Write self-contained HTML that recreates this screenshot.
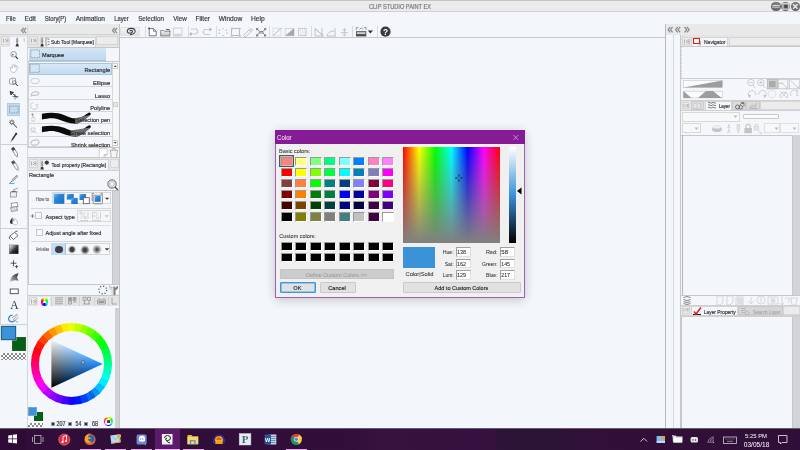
<!DOCTYPE html>
<html><head><meta charset="utf-8">
<style>
*{box-sizing:border-box;margin:0;padding:0}
html,body{width:800px;height:450px;overflow:hidden;background:#f3f6fa;font-family:"Liberation Sans",sans-serif;color:#333}
.a{position:absolute}
.t{position:absolute;white-space:nowrap;font-size:6.5px;line-height:8px}
svg{position:absolute;overflow:visible}
</style></head><body>

<div class="a" style="left:0px;top:0px;width:800px;height:12px;background:#ebebeb;border-top:1px solid #c4c4c4;border-bottom:1px solid #d0d0d0"></div>
<div class="a" style="left:771.4px;top:1.9px;width:9.2px;height:9.2px;border-radius:50%;background:radial-gradient(circle at 50% 35%,#8c8c8c,#5c5c5c 80%)"></div>
<div class="a" style="left:781.1999999999999px;top:1.9px;width:9.2px;height:9.2px;border-radius:50%;background:radial-gradient(circle at 50% 35%,#8c8c8c,#5c5c5c 80%)"></div>
<div class="a" style="left:790.6999999999999px;top:1.9px;width:9.2px;height:9.2px;border-radius:50%;background:radial-gradient(circle at 50% 35%,#8c8c8c,#5c5c5c 80%)"></div>
<svg style="left:0px;top:0px" width="800" height="12" viewBox="0 0 800 12"><rect x="772.3" y="5" width="7.4" height="2.6" fill="#d8d8d8"/><rect x="772.3" y="6" width="7.4" height="0.6" fill="#666"/><rect x="782.9" y="3.6" width="5.8" height="5.6" fill="none" stroke="#d0d0d0" stroke-width="1.2"/><rect x="784.3" y="5" width="3" height="2.8" fill="#444"/><path d="M793 4.2 L797.6 8.8 M797.6 4.2 L793 8.8" stroke="#eee" stroke-width="1.3"/></svg>
<div class="a" style="left:0px;top:12px;width:800px;height:13px;background:#f3f6fa;border-bottom:1px solid #cdd0d4"></div>
<div class="a" style="left:119px;top:24px;width:546px;height:14px;background:#f3f6fa;border-bottom:1px solid #c6c8cc"></div>
<div class="a" style="left:120.3px;top:26.7px;width:20.2px;height:9.5px;background:linear-gradient(#f4f4f4,#e2e2e2);border:0.5px solid #e0e0e0;border-radius:1px"></div>
<div class="a" style="left:144.5px;top:26px;width:0.8px;height:11px;background:#d8dadd"></div>
<div class="a" style="left:187.8px;top:26px;width:0.8px;height:11px;background:#d8dadd"></div>
<div class="a" style="left:216px;top:26px;width:0.8px;height:11px;background:#d8dadd"></div>
<div class="a" style="left:269.4px;top:26px;width:0.8px;height:11px;background:#d8dadd"></div>
<div class="a" style="left:311.3px;top:26px;width:0.8px;height:11px;background:#d8dadd"></div>
<div class="a" style="left:352.4px;top:26px;width:0.8px;height:11px;background:#d8dadd"></div>
<div class="a" style="left:376.8px;top:26px;width:0.8px;height:11px;background:#d8dadd"></div>
<svg style="left:0px;top:0px" width="400" height="40" viewBox="0 0 400 40"><path d="M131.2 31.3 m-1.3 0 a1.3 1.0 0 1 1 2.6 0 a2.6 1.9 0 1 1 -5.2 0 a3.9 2.9 0 1 1 7.8 0 a5 3.3 0 0 1 -5 3.3" fill="none" stroke="#3d3d3d" stroke-width="1.05"/><path d="M149.2 28.6 h4.3 l2.7 2.7 v4.5 h-7z" fill="#fff" stroke="#444" stroke-width="0.7"/><path d="M153.5 28.6 v2.7 h2.7" fill="none" stroke="#444" stroke-width="0.6"/><circle cx="149" cy="28.3" r="0.9" fill="#333"/><defs><linearGradient id="fo" x1="0" y1="0" x2="0" y2="1"><stop offset="0" stop-color="#f4f4f4"/><stop offset="1" stop-color="#bdbdbd"/></linearGradient></defs><path d="M160.6 30.5 h3 l0.8 0.8 h5.5 v4.7 h-9.3z" fill="url(#fo)" stroke="#555" stroke-width="0.6"/><path d="M166 30 a2.5 2 0 0 1 4 0.5" fill="none" stroke="#333" stroke-width="0.9"/><path d="M170 30.5 l0.5 1 l-1.3 -0.2z" fill="#333"/><rect x="173.3" y="28" width="8.7" height="8" fill="none" stroke="#c8c8c8" stroke-width="0.8"/><rect x="174.5" y="33.8" width="6.3" height="2" fill="#d0d0d0"/><path d="M191 29 h4.3 a2.5 2.5 0 0 1 0 5 h-5" fill="none" stroke="#b8b8b8" stroke-width="1.1" stroke-dasharray="1.2,0.5"/><path d="M189 34 l2.5 -2 v4z" fill="#b0b0b0"/><path d="M210 34.5 h-4.3 a2.5 2.5 0 0 1 0 -5 h5" fill="none" stroke="#b8b8b8" stroke-width="1.1" stroke-dasharray="1.2,0.5"/><path d="M212 29.5 l-2.5 -2 v4z" fill="#b0b0b0"/><g fill="#b0b0b0"><circle cx="223" cy="28.6" r="0.7"/><circle cx="226.3" cy="30.2" r="0.7"/><circle cx="227" cy="33.2" r="0.7"/><circle cx="223" cy="35.6" r="0.7"/><circle cx="219.4" cy="33.2" r="0.7"/><circle cx="219.6" cy="30" r="0.7"/></g><rect x="231.6" y="28.6" width="8" height="7" fill="none" stroke="#aaa" stroke-width="0.8"/><g fill="#c8c8c8"><rect x="230.6" y="27.6" width="2.2" height="2.2"/><rect x="238.5" y="27.6" width="2.2" height="2.2"/><rect x="230.6" y="34.6" width="2.2" height="2.2"/><rect x="238.5" y="34.6" width="2.2" height="2.2"/></g><path d="M243.5 35.5 l5.5 -5.5 l1.8 1.8 l-5.5 5.5z" fill="none" stroke="#b5b5b5" stroke-width="0.8"/><path d="M249 30 l2 -2 l2 2 l-2 2z" fill="#ddd" stroke="#bbb" stroke-width="0.5"/><path d="M257.5 29.5 l2 2 h3.5 l2 -2 M257.5 35 l2 -2 h3.5 l2 2 M259.5 31.5 v1.5 M263 31.5 v1.5" fill="none" stroke="#888" stroke-width="1"/><g fill="#888"><rect x="256" y="28" width="2.2" height="2.2"/><rect x="264" y="28" width="2.2" height="2.2"/><rect x="256" y="34.3" width="2.2" height="2.2"/><rect x="264" y="34.3" width="2.2" height="2.2"/></g><rect x="273" y="28.3" width="8" height="7.5" fill="none" stroke="#c0c0c0" stroke-width="0.7" stroke-dasharray="1,0.6"/><path d="M272.8 36 L281.3 28" stroke="#b0b0b0" stroke-width="0.8"/><rect x="285.2" y="28.3" width="8.8" height="7.5" fill="none" stroke="#c0c0c0" stroke-width="0.6"/><path d="M285.2 35.8 L294 28.3 V35.8z" fill="#a8a8a8"/><rect x="297.8" y="27.8" width="9" height="8.4" fill="#eceef0"/><rect x="298.5" y="28.5" width="7.6" height="7" fill="none" stroke="#9a9a9a" stroke-width="0.8" stroke-dasharray="0.9,0.9"/><path d="M315 28.5 V36 H323.5 z M315 28.5 L323.5 36 M322 28 v8" fill="none" stroke="#b8b8b8" stroke-width="0.8"/><path d="M327 36 h9 M335 28 v8 M327 36 a7 5 0 0 1 7 -5" fill="none" stroke="#bdbdbd" stroke-width="0.9"/><path d="M344.5 27.8 v8.5 M342.5 30 h4 M341 32.5 h7 M342.5 35 h4" fill="none" stroke="#c8c8c8" stroke-width="1.1"/><defs><linearGradient id="sc" x1="0" y1="0" x2="0" y2="1"><stop offset="0" stop-color="#777"/><stop offset="1" stop-color="#444"/></linearGradient></defs><rect x="356" y="31" width="10.3" height="5.4" fill="url(#sc)"/><rect x="357" y="32.3" width="8.3" height="1.6" fill="#ddd"/><path d="M356.3 29.8 v-2.2 h2 M366 29.8 v-2.2 h-2 M359.5 29.3 l1.8 -1.3 l1.8 1.3" fill="none" stroke="#555" stroke-width="0.6"/><path d="M367.8 30.4 h5.2 l-2.6 3z" fill="#333"/><circle cx="385.5" cy="31.7" r="5.1" fill="#3a3a3a"/><text x="385.6" y="34.8" font-size="8.4" font-weight="bold" text-anchor="middle" fill="#fff" font-family="Liberation Sans">?</text></svg>
<div class="a" style="left:120px;top:38px;width:545px;height:390px;background:#f3f6fa"></div>
<div class="a" style="left:0px;top:24px;width:119px;height:11.3px;background:#e9e9e9;border-bottom:0.8px solid #d2d2d2"></div>
<svg style="left:0px;top:0px" width="120" height="40" viewBox="0 0 120 40"><path d="M114.6 28 L112.4 30.6 L114.6 33.2 M117 28 L114.8 30.6 L117 33.2 M23.6 28 L21.4 30.6 L23.6 33.2 M26 28 L23.8 30.6 L26 33.2" fill="none" stroke="#8a8a8a" stroke-width="1.2"/></svg>
<div class="a" style="left:119px;top:24px;width:1px;height:404px;background:#c4c4c4"></div>
<div class="a" style="left:0px;top:35px;width:27px;height:12px;background:#e5e5e5"></div>
<div class="a" style="left:1px;top:36px;width:9px;height:8.5px;background:#ececec;border:1px solid #d6d6d6"></div>
<svg style="left:1px;top:36px" width="9" height="9" viewBox="0 0 9 9"><path d="M2.5 2.5 v4 M4 3 l1.5 1.5 L4 6 M5.5 3h2 M5.5 4.5h2 M5.5 6h2" stroke="#888" stroke-width="0.6" fill="none"/></svg>
<div class="a" style="left:10px;top:36.5px;width:16.5px;height:10.5px;background:#f3f6fa"></div>
<svg style="left:14px;top:37.3px" width="6" height="10" viewBox="0 0 6 10"><path d="M2.9 0.3 L3.5 0.3 L4.3 3 L4.1 6.6 L2.3 6.6 L2.1 3 Z" fill="#a8a8a8"/><path d="M3.2 1 v5" stroke="#666" stroke-width="0.35"/><path d="M1.6 9.6 q0.2 -3 1.6 -3 q1.4 0 1.6 3z" fill="#333"/></svg>
<svg style="left:0px;top:0px" width="30" height="50" viewBox="0 0 30 50"><path d="M23.6 38.8 l0.7 -0.3 v3.5" stroke="#999" stroke-width="0.5" fill="none"/></svg>
<div class="a" style="left:27.2px;top:25px;width:0.8px;height:403px;background:#d6d6d6"></div>
<div class="a" style="left:0px;top:47px;width:27px;height:278px;background:#f3f6fa;border-left:1px solid #d3d3d3;border-bottom:1px solid #d0d0d0"></div>
<div class="a" style="left:0px;top:144px;width:27px;height:1px;background:#cfcfcf"></div>
<div class="a" style="left:0px;top:228px;width:27px;height:1px;background:#cfcfcf"></div>
<div class="a" style="left:7.1px;top:102.9px;width:13px;height:13px;background:#c5dcef;border:1px solid #b0cce4"></div>
<svg style="left:0px;top:0px" width="27" height="330" viewBox="0 0 27 330"><rect x="9.6" y="106" width="8.6" height="7" fill="none" stroke="#555" stroke-width="0.6" stroke-dasharray="0.9,0.8"/><circle cx="13.6" cy="54.3" r="2.8" fill="#fafafa" stroke="#777" stroke-width="0.7"/><circle cx="12.8" cy="54.8" r="0.7" fill="#333"/><path d="M15.6 56.4 l2.2 2.6" stroke="#222" stroke-width="1.1"/><path d="M11 70.5 l-1-2.5 l1-0.8 l1.3 1.3 v-3.3 l1-0.6 l0.9 0.6 v2 l1-2.3 l1 0.5 l-0.5 2.3 l1.3-1.3 l0.9 0.7 l-1.5 3 l-1.3 2.2 h-2.6z" fill="#fff" stroke="#999" stroke-width="0.55"/><path d="M9.5 79.5 l3-1.5 l3 0.5 v5.5 l-3 0.5 l-3-1z" fill="#fff" stroke="#666" stroke-width="0.6"/><path d="M12.5 78 v6.5" stroke="#888" stroke-width="0.5"/><circle cx="14.5" cy="82.3" r="1.7" fill="none" stroke="#555" stroke-width="0.6"/><path d="M15.7 83.5 l2 2.5" stroke="#222" stroke-width="0.9"/><path d="M10 91.5 l3.5 1 l-1 1 l5 4.5 M10 91.5 l1 3.5 l1-1" fill="#222" stroke="#222" stroke-width="0.8"/><path d="M15 94 v5.5 M12.5 96.5 h6" stroke="#333" stroke-width="0.6"/><g stroke="#444" stroke-width="0.7"><path d="M11.8 119.5 v5.6 M9 122.3 h5.6 M9.8 120.3 l4 4 M13.8 120.3 l-4 4"/></g><circle cx="11.8" cy="122.3" r="1.5" fill="#fff" stroke="#333" stroke-width="0.6"/><path d="M13.2 123.8 l3.8 3.8" stroke="#333" stroke-width="1"/><path d="M16 134 l-4 6" stroke="#333" stroke-width="1.4"/><path d="M12 140 l-1 1.8" stroke="#555" stroke-width="0.8"/><circle cx="16.2" cy="133.8" r="1" fill="#222"/><path d="M11.5 148.5 l2-1.3 l4 6.5 l-0.3 3.2 l-2.2-2z" fill="#fff" stroke="#444" stroke-width="0.6"/><path d="M11.3 148.4 l2.4 -1.4 l1.6 2.6 l-2.5 1.5z" fill="#444"/><path d="M11.5 162 l2.5-1.2 l4 6.3 l0.2 3.2 l-2.6 -1.8z" fill="#fff" stroke="#555" stroke-width="0.6"/><path d="M11.3 161.8 l2.6 -1.2 l1.5 2.4 l-2.6 1.4z" fill="#555"/><path d="M17.5 175.5 l-5.5 5.5" stroke="#888" stroke-width="1.8"/><path d="M17.5 175.5 l-5.5 5.5" stroke="#eee" stroke-width="0.6"/><path d="M12 181 l-1.5 1.5 q-0.5 1 -1.2 1" stroke="#555" stroke-width="0.9" fill="none"/><path d="M9.5 183.5 h5" stroke="#5aaee0" stroke-width="1.1"/><rect x="10.5" y="192" width="6" height="5" fill="#eee" stroke="#555" stroke-width="0.5"/><path d="M11 192 q2.5 -2.5 5 0" fill="#666"/><path d="M13 190 l5 -2 M14 191 l4 1" stroke="#555" stroke-width="0.5"/><path d="M11 203.5 l6 -1 l1 4 l-6 1z" fill="#fff" stroke="#555" stroke-width="0.6"/><path d="M10.5 207.5 l6 -1 l1 4 l-6 1z" fill="#ddd" stroke="#666" stroke-width="0.6"/><path d="M12.5 217.5 q-3 3 -2.5 5 q0.8 2 2.6 1.5z" fill="#333"/><path d="M15 218.5 q3 3 2.5 4.8 q-1 2 -3 1.5 q-2 -0.5 -2 -2.5z" fill="#fff" stroke="#888" stroke-width="0.5"/><path d="M12.6 217.5 q1 2 1.5 4" stroke="#666" stroke-width="0.5" fill="none"/><path d="M10 236 l4.5 -3.5 l3.5 3 l-4.5 4z" fill="#fff" stroke="#333" stroke-width="0.7"/><path d="M9.5 236.5 q-0.5 2.5 0.8 3" stroke="#333" stroke-width="0.8" fill="none"/><path d="M15 232 l2.5 -1" stroke="#333" stroke-width="0.8"/><defs><linearGradient id="gr1" x1="0" y1="0" x2="1" y2="1"><stop offset="0" stop-color="#fff"/><stop offset="0.55" stop-color="#333"/><stop offset="1" stop-color="#000"/></linearGradient><linearGradient id="gr2" x1="1" y1="0" x2="0" y2="1"><stop offset="0" stop-color="#222"/><stop offset="1" stop-color="#ccc"/></linearGradient></defs><rect x="9.5" y="245" width="8.7" height="8.8" fill="url(#gr1)" stroke="#333" stroke-width="0.4"/><path d="M13.5 260.3 v5.8 M10.6 263.2 h5.8 M16.5 265 v3.3 M14.8 266.6 h3.3" stroke="#333" stroke-width="0.8"/><path d="M10 282 q0.5 -7.5 8.5 -8.8 l-1.5 4 l1.5 3.5 q-4 -1.5 -8.5 1.3z" fill="url(#gr2)"/><rect x="10.2" y="289" width="8" height="4.7" fill="#fff" stroke="#333" stroke-width="0.8"/><text x="14.3" y="308.5" font-size="11.5" text-anchor="middle" fill="#333" font-family="Liberation Serif">A</text><path d="M12.5 315.5 a3.2 3.2 0 1 0 1.5 5.5" fill="none" stroke="#3c88c8" stroke-width="1.3"/><path d="M13 320 l5 -5.5 M14 321 l4.5 -3.5 M14 320 l4 2.5 M12 318 l5 -4" stroke="#444" stroke-width="0.45"/></svg>
<div class="a" style="left:12px;top:337.4px;width:14px;height:14px;background:#045f17;border:1px solid #2b5a2b"></div>
<div class="a" style="left:1px;top:326.4px;width:14.6px;height:13.6px;background:#3a92d9;border:1px solid #2b5f8f;box-shadow:0 0 0 0.5px #9cc"></div>
<div class="a" style="left:1px;top:353px;width:25px;height:7px;background:conic-gradient(#8a8a8a 25%,#fff 0 50%,#8a8a8a 0 75%,#fff 0) 0 0/4px 4px"></div>
<div class="a" style="left:28px;top:35px;width:91px;height:12px;background:#e5e5e5"></div>
<div class="a" style="left:28.5px;top:36px;width:9px;height:8.5px;background:#ececec;border:1px solid #d6d6d6"></div>
<svg style="left:28.5px;top:36px" width="9" height="9" viewBox="0 0 9 9"><path d="M2.5 2.5 v4 M4 3 l1.5 1.5 L4 6 M5.5 3h2 M5.5 4.5h2 M5.5 6h2" stroke="#888" stroke-width="0.6" fill="none"/></svg>
<div class="a" style="left:39.8px;top:36.5px;width:56.4px;height:10.5px;background:#f3f6fa;border:1px solid #d4d4d4;border-bottom:none"></div>
<svg style="left:38.6px;top:37.3px" width="14" height="10" viewBox="0 0 14 10"><path d="M2.9 0.3 L3.5 0.3 L4.3 3 L4.1 6.6 L2.3 6.6 L2.1 3 Z" fill="#a8a8a8"/><path d="M3.2 1 v5" stroke="#666" stroke-width="0.35"/><path d="M1.6 9.6 q0.2 -3 1.6 -3 q1.4 0 1.6 3z" fill="#333"/><path d="M8.2 1.3 h-1.3 v7.6 h1.3" fill="none" stroke="#555" stroke-width="0.6"/><path d="M8.6 2.2h1.8 M8.6 4.8h1.8 M8.6 7.4h1.8" stroke="#666" stroke-width="0.9"/></svg>
<div class="a" style="left:96.3px;top:36px;width:21.4px;height:9px;background:#ececec;border:1px solid #d4d4d4"></div>
<div class="a" style="left:28px;top:47px;width:91px;height:15px;background:#f3f6fa;border-top:1px solid #c6c6c6;border-bottom:1px solid #c6c6c6"></div>
<div class="a" style="left:28.5px;top:48px;width:77.5px;height:12.5px;background:linear-gradient(#d3e6f5,#bfd8ed);border-bottom:1px solid #a8c4dc"></div>
<svg style="left:29px;top:48px" width="12" height="12" viewBox="0 0 12 12"><rect x="1.8" y="2" width="8.6" height="7.6" fill="#dbe9f5" stroke="#666" stroke-width="0.6" stroke-dasharray="0.9,0.7"/></svg>
<div class="a" style="left:28px;top:62px;width:83.5px;height:85px;background:#f3f6fa;border-left:1px solid #d0d0d0"></div>
<div class="a" style="left:28.5px;top:62.5px;width:83px;height:12.0px;background:linear-gradient(#d6e8f6,#c3dbef);border:1px solid #a9c6df"></div>
<div class="a" style="left:28.5px;top:74.5px;width:83px;height:12.700000000000003px;border-bottom:1px solid #d6d6d6"></div>
<div class="a" style="left:28.5px;top:87.2px;width:83px;height:12.5px;border-bottom:1px solid #d6d6d6"></div>
<div class="a" style="left:28.5px;top:99.7px;width:83px;height:12.399999999999991px;border-bottom:1px solid #d6d6d6"></div>
<div class="a" style="left:28.5px;top:112.1px;width:83px;height:12.400000000000006px;border-bottom:1px solid #d6d6d6"></div>
<div class="a" style="left:28.5px;top:124.5px;width:83px;height:12.800000000000011px;border-bottom:1px solid #d6d6d6"></div>
<div class="a" style="left:28.5px;top:137.3px;width:83px;height:9.899999999999977px;border-bottom:1px solid #d6d6d6"></div>
<svg style="left:0px;top:0px" width="60" height="150" viewBox="0 0 60 150"><rect x="30.2" y="64.3" width="9.2" height="8" fill="#d4e6f4" stroke="#666" stroke-width="0.55" stroke-dasharray="0.9,0.7"/><ellipse cx="35" cy="81" rx="4.3" ry="2.5" fill="none" stroke="#aaa" stroke-width="0.55"/><path d="M31.5 95.5 q-1 -2.5 2.5 -3.5 q4 -1 5 1 q0.5 2 -4 2.5 q-1.5 0 -2.5 -0.5 l-1.5 1.5" fill="none" stroke="#888" stroke-width="0.55"/><path d="M33.5 102.5 a3.5 3.5 0 1 0 3.5 1.5 l-1.5 1.5" fill="none" stroke="#aaa" stroke-width="0.55"/><path d="M32 114 l1 2 l-1.5 3 M31 121 h4 M33 117 l2.5 2" stroke="#999" stroke-width="0.5" fill="none"/><circle cx="32.5" cy="114.5" r="1" fill="#888"/><path d="M31 128 h4 v3 h-4z M31.5 133 q2 -3 5 0" stroke="#aaa" stroke-width="0.5" fill="none"/><ellipse cx="35" cy="142.5" rx="4.3" ry="2.6" fill="none" stroke="#888" stroke-width="0.55" transform="rotate(-12 35 142.5)"/></svg>
<svg style="left:0px;top:0px" width="120" height="150" viewBox="0 0 120 150"><g transform="translate(0,0)"><defs><linearGradient id="wg0" x1="35" x2="43" gradientUnits="userSpaceOnUse"><stop offset="0" stop-color="#ffffff" stop-opacity="0.2"/><stop offset="0.5" stop-color="#fcfcfc"/><stop offset="1" stop-color="#d8d8d8"/></linearGradient><clipPath id="cp0"><rect x="75.2" y="100" width="30" height="40"/></clipPath></defs><path d="M35.5 114.8 q3 -1.5 7 -1.2 v6 q-4 0.3 -7 -0.8z" fill="url(#wg0)"/><path d="M42 113.7 C50 112.3, 58 112.5, 64 115 S72 118.6, 77 118.3 C82 118, 86 114, 89 112.4 Q91.5 112.6, 90.6 114.6 C87 118, 82 122, 77 123.8 C70 124.2, 64 121.5, 58 119.3 S48 118.5, 42 119.4 Z" fill="#0a0a0a"/><path clip-path="url(#cp0)" d="M40 117.5 C50 116.5, 60 117, 66 117.8 L75.2 118.288 L90.6 114.8 C87 118, 82 122, 77 123.8 C70 124.2, 64 121.5, 58 119.3 S48 118.5, 42 119.4 Z" fill="#707070"/></g><g transform="translate(0,12.8)"><defs><linearGradient id="wg12.8" x1="35" x2="43" gradientUnits="userSpaceOnUse"><stop offset="0" stop-color="#ffffff" stop-opacity="0.2"/><stop offset="0.5" stop-color="#fcfcfc"/><stop offset="1" stop-color="#d8d8d8"/></linearGradient><clipPath id="cp12.8"><rect x="70.7" y="100" width="30" height="40"/></clipPath></defs><path d="M35.5 114.8 q3 -1.5 7 -1.2 v6 q-4 0.3 -7 -0.8z" fill="url(#wg12.8)"/><path d="M42 113.7 C50 112.3, 58 112.5, 64 115 S72 118.6, 77 118.3 C82 118, 86 114, 89 112.4 Q91.5 112.6, 90.6 114.6 C87 118, 82 122, 77 123.8 C70 124.2, 64 121.5, 58 119.3 S48 118.5, 42 119.4 Z" fill="#0a0a0a"/><path clip-path="url(#cp12.8)" d="M40 117.5 C50 116.5, 60 117, 66 117.8 L70.7 117.658 L90.6 114.8 C87 118, 82 122, 77 123.8 C70 124.2, 64 121.5, 58 119.3 S48 118.5, 42 119.4 Z" fill="#707070"/></g></svg>
<div class="a" style="left:111.5px;top:62px;width:7px;height:85.2px;background:#f6f7f9;border-left:1px solid #d8d8d8"></div>
<div class="a" style="left:112.3px;top:63px;width:6px;height:6px;background:#fff;border:1px solid #ccc"></div>
<svg style="left:112px;top:63px" width="7" height="6" viewBox="0 0 7 6"><path d="M1.8 4 L3.3 2.3 L4.8 4z" fill="#444"/></svg>
<div class="a" style="left:112.8px;top:101.5px;width:5px;height:5px;background:#e6e6e6;border:1px solid #cfcfcf"></div>
<div class="a" style="left:112.3px;top:140px;width:6px;height:6px;background:#fff;border:1px solid #ccc"></div>
<svg style="left:112px;top:140px" width="7" height="6" viewBox="0 0 7 6"><path d="M1.8 2 L3.3 3.7 L4.8 2z" fill="#444"/></svg>
<div class="a" style="left:28px;top:147px;width:91px;height:10.5px;background:#f3f6fa;border-top:1px solid #c8c8c8"></div>
<svg style="left:0px;top:0px" width="120" height="160" viewBox="0 0 120 160"><path d="M99.3 148.4 h7.8 v6.2 l-3 3 h-4.8z" fill="#fff" stroke="#bbb" stroke-width="0.6"/><path d="M104.1 157.6 v-3 h3" fill="#eee" stroke="#999" stroke-width="0.6"/><path d="M109.5 150.3 h8.6 M110.4 150.8 l1 7 h5 l1 -7 M112 150.3 l0.6 -1.8 h2.4 l0.6 1.8" fill="#f4f4f4" stroke="#9a9a9a" stroke-width="0.7"/></svg>
<div class="a" style="left:28px;top:157.2px;width:91px;height:12.6px;background:#e5e5e5;border-top:1px solid #c8c8c8"></div>
<div class="a" style="left:28.5px;top:158.5px;width:9px;height:9px;background:#ececec;border:1px solid #d6d6d6"></div>
<svg style="left:28.5px;top:158.5px" width="9" height="9" viewBox="0 0 9 9"><path d="M2.5 2.5 v4 M4 3 l1.5 1.5 L4 6 M5.5 3h2 M5.5 4.5h2 M5.5 6h2" stroke="#888" stroke-width="0.6" fill="none"/></svg>
<div class="a" style="left:39.8px;top:158.5px;width:69.5px;height:11.3px;background:#f3f6fa;border:1px solid #d4d4d4;border-bottom:none"></div>
<svg style="left:39.2px;top:159.7px" width="14" height="10" viewBox="0 0 14 10"><path d="M2.9 0.3 L3.5 0.3 L4.3 3 L4.1 6.6 L2.3 6.6 L2.1 3 Z" fill="#a8a8a8"/><path d="M3.2 1 v5" stroke="#666" stroke-width="0.35"/><path d="M1.6 9.6 q0.2 -3 1.6 -3 q1.4 0 1.6 3z" fill="#333"/><circle cx="7.8" cy="2.6" r="1.9" fill="#333"/><circle cx="7.8" cy="2.6" r="0.7" fill="#fff"/><path d="M7.8 0.2 v4.8 M5.4 2.6 h4.8 M6.1 0.9 l3.4 3.4 M9.5 0.9 l-3.4 3.4" stroke="#333" stroke-width="0.6"/></svg>
<div class="a" style="left:109.5px;top:158.5px;width:9px;height:9px;background:#ececec;border:1px solid #d6d6d6"></div>
<div class="a" style="left:28px;top:170px;width:91px;height:21px;background:#f3f6fa;border-top:1px solid #d0d0d0;border-bottom:1px solid #c4c4c4"></div>
<svg style="left:106px;top:178px" width="14" height="14" viewBox="0 0 14 14"><circle cx="6" cy="6" r="4.2" fill="#eee" stroke="#555" stroke-width="0.9"/><circle cx="6" cy="6" r="2.4" fill="none" stroke="#999" stroke-width="0.5"/><path d="M9 9 l3 3" stroke="#444" stroke-width="1.3"/></svg>
<div class="a" style="left:28px;top:191px;width:84px;height:93px;background:#f3f6fa;border-left:1.5px solid #c9c9c9"></div>
<div class="a" style="left:112px;top:191px;width:7px;height:93px;background:#d3d4d8;border-left:1px solid #c4c5c9"></div>
<div class="a" style="left:51.5px;top:192.2px;width:59.1px;height:12.2px;background:#f7f8fa;border:1px solid #d6d6d6"></div>
<div class="a" style="left:51.8px;top:192.5px;width:13.2px;height:11.6px;background:#c6def0;border-right:1px solid #b5cfe4"></div>
<svg style="left:0px;top:0px" width="120" height="260" viewBox="0 0 120 260"><defs><linearGradient id="bq" x1="0" y1="0" x2="1" y2="1"><stop offset="0" stop-color="#6ab8f0"/><stop offset="0.35" stop-color="#2a86da"/><stop offset="1" stop-color="#1c6cc0"/></linearGradient></defs><rect x="54.1" y="194" width="10" height="9.8" fill="url(#bq)"/><rect x="66.8" y="194" width="7" height="5.6" fill="url(#bq)"/><rect x="71.2" y="197.9" width="6.5" height="6.1" fill="url(#bq)"/><rect x="79.5" y="194" width="6.5" height="6" fill="url(#bq)"/><rect x="83.3" y="197.7" width="6" height="6" fill="#fff" stroke="#555" stroke-width="0.8"/><path d="M94 193.4 h-1.8 v7.5 M100.5 193.4 h1.8 v2" fill="none" stroke="#777" stroke-width="0.8"/><rect x="93.2" y="195.2" width="9.2" height="8.6" rx="1" fill="none" stroke="#777" stroke-width="0.8"/><rect x="94.6" y="196" width="6" height="5.8" fill="url(#bq)"/><path d="M104.9 197.8 h4.4 l-2.2 2z" fill="#333"/></svg>
<div class="a" style="left:31px;top:207.6px;width:80px;height:0.8px;background:#d8d8d8"></div>
<svg style="left:29px;top:210px" width="8" height="12" viewBox="0 0 8 12"><path d="M1.5 6 h4 M3.5 4 v4" stroke="#555" stroke-width="0.6"/></svg>
<div class="a" style="left:35.3px;top:211.8px;width:7px;height:7px;background:#f8f8f8;border:1px solid #c8c8c8"></div>
<div class="a" style="left:77.3px;top:210.1px;width:33.3px;height:12.3px;background:#f5f6f8;border:1px solid #d8d8d8"></div>
<svg style="left:0px;top:0px" width="120" height="230" viewBox="0 0 120 230"><g fill="none" stroke="#c4c4c4" stroke-width="0.7"><circle cx="81" cy="213" r="1.2"/><circle cx="85" cy="217.5" r="1.2"/><path d="M80.5 218.5 L85.5 212.2 M88 212 v7 M80 220.5 h8"/><path d="M92.5 219 v-6.5 h3 a1.8 1.8 0 0 1 0 3.6 h-3 M96 216.5 l3 3 M99 216.5 l-3 3 M100.5 212 v7 M92 220.5 h9"/></g><path d="M104.6 215.3 h4.4 l-2.2 2.2z" fill="#c4c4c4"/></svg>
<div class="a" style="left:31px;top:225px;width:80px;height:0.8px;background:#e0e0e0"></div>
<div class="a" style="left:36.4px;top:229px;width:7px;height:7px;background:#f8f8f8;border:1px solid #c8c8c8"></div>
<div class="a" style="left:31px;top:241px;width:80px;height:0.8px;background:#d8d8d8"></div>
<div class="a" style="left:51.3px;top:243px;width:59.2px;height:12.2px;background:#f7f8fa;border:1px solid #d6d6d6"></div>
<div class="a" style="left:51.6px;top:243.3px;width:14.4px;height:11.7px;background:#c3dcef;border-right:1px solid #a9c6df"></div>
<div class="a" style="left:55px;top:245.6px;width:7.5px;height:7.5px;border-radius:50%;background:#3b3f45"></div>
<div class="a" style="left:67px;top:244.8px;width:9.6px;height:9.6px;border-radius:50%;background:radial-gradient(circle closest-side,#3b3f45 0,#3b3f45 48%,#9a9a9a 62%,#d0d0d0 80%,rgba(220,220,220,0) 100%)"></div>
<div class="a" style="left:79.5px;top:244.6px;width:10px;height:10px;border-radius:50%;background:radial-gradient(circle closest-side,#3b3f45 0,#3b3f45 30%,#777 52%,#c4c4c4 78%,rgba(220,220,220,0) 100%)"></div>
<div class="a" style="left:92px;top:244.4px;width:10.4px;height:10.4px;border-radius:50%;background:radial-gradient(circle closest-side,#3b3f45 0,#555 20%,#999 50%,#cfcfcf 78%,rgba(220,220,220,0) 100%)"></div>
<svg style="left:104px;top:245px" width="6" height="8" viewBox="0 0 6 8"><path d="M0.8 3.2 h4.4 l-2.2 2.2z" fill="#333"/></svg>
<div class="a" style="left:28px;top:284px;width:91px;height:11px;background:#f3f6fa;border-top:1px solid #c8c8c8"></div>
<svg style="left:0px;top:0px" width="121" height="300" viewBox="0 0 121 300"><circle cx="102.8" cy="290" r="3.9" fill="none" stroke="#3a3a3a" stroke-width="1.1" stroke-dasharray="1.1,1.95"/><path d="M109.6 285.6 q-1 3.6 2.3 4.6 v4.8 h3.6 v-4.8 q3.3 -1 2.3 -4.6 l-1.9 2 h-1.1 l-0.8 -2.2 l-0.8 2.2 h-1.1z" fill="#7e7e7e"/><path d="M109.6 285.6 q-1 3.6 2.3 4.6 v4.8 h1.7 v-7.4 h-0.5 l-1.6 0z" fill="#dcdcdc"/></svg>
<div class="a" style="left:28px;top:295px;width:91px;height:10.5px;background:#e5e5e5;border-top:1px solid #c8c8c8"></div>
<div class="a" style="left:28.5px;top:296.5px;width:8.5px;height:8.5px;background:#ececec;border:1px solid #d6d6d6"></div>
<svg style="left:28.5px;top:296.5px" width="9" height="9" viewBox="0 0 9 9"><path d="M2.5 2.5 v4 M4 3 l1.5 1.5 L4 6 M5.5 3h2 M5.5 4.5h2 M5.5 6h2" stroke="#888" stroke-width="0.6" fill="none"/></svg>
<div class="a" style="left:37.9px;top:296.5px;width:12.6px;height:9px;background:#f3f6fa"></div>
<div class="a" style="left:40.6px;top:298.1px;width:7.6px;height:7.6px;border-radius:50%;background:conic-gradient(#ff0,#0f0,#0ff,#00f,#f0f,#f00,#ff0)"></div>
<div class="a" style="left:43.1px;top:300.6px;width:2.6px;height:2.6px;border-radius:50%;background:#fff"></div>
<div class="a" style="left:50.5px;top:296.5px;width:14.3px;height:9px;background:#e4e4e4;border-left:1px solid #d2d2d2"></div>
<div class="a" style="left:65px;top:296.5px;width:14.3px;height:9px;background:#e4e4e4;border-left:1px solid #d2d2d2"></div>
<div class="a" style="left:79.3px;top:296.5px;width:14.3px;height:9px;background:#e4e4e4;border-left:1px solid #d2d2d2"></div>
<div class="a" style="left:93.8px;top:296.5px;width:14.3px;height:9px;background:#e4e4e4;border-left:1px solid #d2d2d2"></div>
<div class="a" style="left:108.2px;top:296.5px;width:10.799999999999997px;height:9px;background:#e4e4e4;border-left:1px solid #d2d2d2"></div>
<svg style="left:0px;top:0px" width="121" height="310" viewBox="0 0 121 310"><g stroke="#8a8a8a" stroke-width="0.7" fill="none"><path d="M55 297.8 h8 M55 299.8 h8 M55 301.8 h8 M55 303.8 h8"/><path d="M68.5 297.5 h3 v3 h-3z M73 297.5 h3 v3 h-3z M68.5 301.5 h3 v2.5 h-3z M73 302 h3.5"/><path d="M83 297.3 h3 v3 h-3z M87.5 297.3 h3 v3 h-3z M84.5 300.5 v3.5 M89 300.5 v3.5 M83 304 h7"/><path d="M97.5 300 h8 v4 h-8z M98.5 298 l2 2 M104 298 v2"/><path d="M112 297.5 v6.5 h5"/></g><g fill="#999"><rect x="98.5" y="301" width="6" height="2"/><rect x="69" y="298" width="2" height="2"/><rect x="73.5" y="298" width="2" height="2"/></g></svg>
<div class="a" style="left:28px;top:305.5px;width:91px;height:122.5px;background:#f3f6fa"></div>
<div class="a" style="left:114.9px;top:308px;width:4.6px;height:120px;background:#d0d1d5"></div>
<div class="a" style="left:30.8px;top:323.3px;width:81.4px;height:81.4px;border-radius:50%;background:conic-gradient(from -5deg,#eaff00 0deg 10deg,#bfff00 10deg 20deg,#95ff00 20deg 30deg,#6aff00 30deg 40deg,#40ff00 40deg 50deg,#15ff00 50deg 60deg,#00ff15 60deg 70deg,#00ff40 70deg 80deg,#00ff6a 80deg 90deg,#00ff95 90deg 100deg,#00ffbf 100deg 110deg,#00ffea 110deg 120deg,#00eaff 120deg 130deg,#00bfff 130deg 140deg,#0095ff 140deg 150deg,#006aff 150deg 160deg,#0040ff 160deg 170deg,#0015ff 170deg 180deg,#1500ff 180deg 190deg,#4000ff 190deg 200deg,#6a00ff 200deg 210deg,#9500ff 210deg 220deg,#bf00ff 220deg 230deg,#ea00ff 230deg 240deg,#ff00ea 240deg 250deg,#ff00bf 250deg 260deg,#ff0095 260deg 270deg,#ff006a 270deg 280deg,#ff0040 280deg 290deg,#ff0015 290deg 300deg,#ff1500 300deg 310deg,#ff4000 310deg 320deg,#ff6a00 320deg 330deg,#ff9500 330deg 340deg,#ffbf00 340deg 350deg,#ffea00 350deg 360deg)"></div>
<div class="a" style="left:38.8px;top:331.3px;width:65.4px;height:65.4px;border-radius:50%;background:#f3f6fa"></div>
<svg style="left:28px;top:318px" width="90" height="90" viewBox="0 0 90 90"><defs><linearGradient id="tc" gradientUnits="userSpaceOnUse" x1="23.4" y1="46" x2="74.7" y2="46"><stop offset="0" stop-color="#000"/><stop offset="1" stop-color="#1a8cff"/></linearGradient><linearGradient id="tw" gradientUnits="userSpaceOnUse" x1="41.48" y1="61.35" x2="23.4" y2="22.2"><stop offset="0" stop-color="#000"/><stop offset="1" stop-color="#f2f2f2"/></linearGradient></defs><path d="M23.4 22.2 L74.7 46 L23.4 69.7z" fill="url(#tc)"/><path d="M23.4 22.2 L74.7 46 L23.4 69.7z" fill="url(#tw)" style="mix-blend-mode:plus-lighter"/><circle cx="55" cy="44.3" r="1.7" fill="none" stroke="#555" stroke-width="0.6"/><circle cx="55" cy="44.3" r="1" fill="#bbb"/><path d="M61 73 l4 7 M63 72 l4 7" stroke="#333" stroke-width="0.5"/></svg>
<div class="a" style="left:33.5px;top:412.3px;width:9.6px;height:9.2px;background:#045f17"></div>
<div class="a" style="left:28.1px;top:407.3px;width:9.4px;height:9px;background:#3a92d9;border:1px solid #7aa4c8"></div>
<div class="a" style="left:28px;top:422.5px;width:15px;height:4px;background:conic-gradient(#8a8a8a 25%,#fff 0 50%,#8a8a8a 0 75%,#fff 0) 0 0/4px 4px"></div>
<div class="a" style="left:50.6px;top:421.8px;width:4px;height:4.2px;background:#1a2a5a;border:0.5px solid #999"></div>
<div class="a" style="left:67.5px;top:421.8px;width:4px;height:4.2px;background:#1a2a5a;border:0.5px solid #999"></div>
<div class="a" style="left:83.75px;top:421.8px;width:4px;height:4.2px;background:#1a2a5a;border:0.5px solid #999"></div>
<div class="a" style="left:103.6px;top:417.4px;width:9px;height:9px;border-radius:50%;background:conic-gradient(#ff0,#0f0,#0ff,#00f,#f0f,#f00,#ff0)"></div>
<div class="a" style="left:105.3px;top:419.1px;width:5.6px;height:5.6px;border-radius:50%;background:#fff"></div>
<div class="a" style="left:106.5px;top:420.2px;width:3.2px;height:3.2px;background:linear-gradient(135deg,#e33,#222)"></div>
<div class="a" style="left:665px;top:24px;width:135px;height:11px;background:#e9e9e9"></div>
<svg style="left:665px;top:24px" width="30" height="11" viewBox="0 0 30 11"><path d="M5.2 3 L3 5.7 L5.2 8.4 M7.6 3 L5.4 5.7 L7.6 8.4 M12.8 3 L10.6 5.7 L12.8 8.4 M15.2 3 L13 5.7 L15.2 8.4 M19.5 3 L21.7 5.7 L19.5 8.4 M21.9 3 L24.1 5.7 L21.9 8.4" fill="none" stroke="#8a8a8a" stroke-width="1.2"/></svg>
<div class="a" style="left:665px;top:24px;width:1px;height:404px;background:#b8b8b8"></div>
<div class="a" style="left:666px;top:35px;width:14.6px;height:393px;background:#f3f6fa"></div>
<div class="a" style="left:672.7px;top:35px;width:1px;height:393px;background:#d9dadd"></div>
<div class="a" style="left:680.3px;top:35px;width:1.6px;height:393px;background:#c9c9c9"></div>
<div class="a" style="left:681px;top:35px;width:119px;height:12px;background:#e5e5e5"></div>
<div class="a" style="left:681.5px;top:36.5px;width:8.5px;height:8.5px;background:#ececec;border:1px solid #d6d6d6"></div>
<svg style="left:681.5px;top:36.5px" width="9" height="9" viewBox="0 0 9 9"><path d="M2.5 2.5 v4 M4 3 l1.5 1.5 L4 6 M5.5 3h2 M5.5 4.5h2 M5.5 6h2" stroke="#888" stroke-width="0.6" fill="none"/></svg>
<div class="a" style="left:691.3px;top:36.5px;width:37px;height:10.5px;background:#f3f6fa;border:1px solid #d4d4d4;border-bottom:none"></div>
<svg style="left:692px;top:37px" width="12" height="10" viewBox="0 0 12 10"><rect x="1.5" y="1.5" width="6" height="5" fill="#fff" stroke="#d22" stroke-width="1.1"/><path d="M8.5 4 v4 h-2" fill="none" stroke="#888" stroke-width="0.6"/></svg>
<div class="a" style="left:729px;top:36.5px;width:71px;height:9px;background:#ececec;border:1px solid #d6d6d6;border-right:none"></div>
<div class="a" style="left:681px;top:45.5px;width:119px;height:1.5px;background:#c8c8c8"></div>
<div class="a" style="left:681px;top:47px;width:119px;height:31px;background:#f3f6fa;border-left:1px dotted #ccc"></div>
<div class="a" style="left:681px;top:77.6px;width:119px;height:1px;background:#cfcfcf"></div>
<div class="a" style="left:681px;top:78.6px;width:119px;height:21.5px;background:#f3f6fa"></div>
<svg style="left:0px;top:0px" width="800" height="100" viewBox="0 0 800 100"><rect x="683.3" y="80.5" width="39" height="7" fill="#fafbfc" stroke="#c8c8c8" stroke-width="0.6"/><path d="M683.5 87.5 L722.3 80.5 V87.5z" fill="#9c9da0"/><rect x="683.3" y="91.2" width="39" height="6.7" fill="#fafbfc" stroke="#c8c8c8" stroke-width="0.6"/><path d="M683.3 91 L691.5 97.9 H683.3z M698 97.9 L706 91 H713 L721.8 97.9z" fill="#9c9da0"/></svg>
<svg style="left:0px;top:0px" width="800" height="100" viewBox="0 0 800 100"><g fill="none" stroke="#c4c4c4" stroke-width="0.8"><circle cx="750.8" cy="82.6" r="3.2"/><path d="M749 82.6h3.6 M753 85 l2.2 3"/><circle cx="760.8" cy="82.6" r="3.2"/><path d="M759 82.6h3.6 M760.8 80.8v3.6 M763 85 l2.2 3"/><rect x="778.3" y="79.3" width="9.5" height="9.5"/><path d="M778.3 83.5 h5 M781 82 l6 6"/><rect x="789.3" y="79.3" width="10.5" height="9.5"/><path d="M790.5 80.5 l8 7.5"/><path d="M749 96.5 a3.8 3.8 0 1 1 6.8 -1.5"/><path d="M765.5 96.5 a3.8 3.8 0 1 0 -6.8 -1.5"/><circle cx="772" cy="94" r="3.7" stroke-dasharray="1,0.9"/><path d="M780 97.5 a4 4 0 1 1 7.5 0 M780.5 91.5 l6.5 6.5 M787 91.5 l-6.5 6.5"/><path d="M791 96 a4 4 0 0 1 7 -4 M797 90 v6 l1.5 -1"/></g><path d="M749.5 98 l-1.6 -3.2 l3.2 0.4z M764.8 98 l1.6 -3.2 l-3.2 0.4z M786 90.5 l1.5 1.5" fill="#c0c0c0"/><rect x="767.3" y="79.3" width="10" height="9.6" fill="#d0d0d0" stroke="#b0b0b0" stroke-width="0.7"/><rect x="769" y="81" width="6.6" height="6.2" fill="#ababab"/><path d="M786.5 87.5 l1.3 1.3 l-2.2 0.2z M798.5 88.5 l0.8 -2 l-2.5 0.5z" fill="#c0c0c0"/></svg>
<div class="a" style="left:681px;top:100.4px;width:119px;height:9.5px;background:#e5e5e5;border-top:1px solid #cfcfcf"></div>
<div class="a" style="left:681.5px;top:101.5px;width:7.5px;height:7.5px;background:#ececec;border:1px solid #d6d6d6"></div>
<svg style="left:681.5px;top:101.5px" width="8" height="8" viewBox="0 0 8 8"><path d="M2 2 v3.5 M3.3 2.5 l1.2 1.2 L3.3 5 M4.8 2.5h1.8 M4.8 3.7h1.8 M4.8 5h1.8" stroke="#888" stroke-width="0.5" fill="none"/></svg>
<div class="a" style="left:691px;top:101.3px;width:13px;height:8.6px;background:#dcdcdc;border:1px solid #ccc"></div>
<svg style="left:0px;top:0px" width="800" height="112" viewBox="0 0 800 112"><path d="M693.5 103.5 q2 -0.8 3.5 0.5 q1.5 -1.3 3.5 -0.5 v5 q-2 -0.8 -3.5 0.5 q-1.5 -1.3 -3.5 -0.5z M697 104 v5" fill="#e6e6e6" stroke="#bdbdbd" stroke-width="0.6"/></svg>
<div class="a" style="left:705px;top:101px;width:27px;height:9px;background:#f3f6fa;border:1px solid #d4d4d4;border-bottom:none"></div>
<svg style="left:0px;top:0px" width="800" height="112" viewBox="0 0 800 112"><path d="M708 102.8 q1 -1 2 0 t2 0 t2 0 t2 0 M708 105.2 q1 -1 2 0 t2 0 t2 0 t2 0 M708 107.6 q1 -1 2 0 t2 0 t2 0 t2 0" fill="none" stroke="#555" stroke-width="0.75"/></svg>
<div class="a" style="left:732px;top:101.3px;width:13.5px;height:8.6px;background:#dcdcdc;border:1px solid #ccc"></div>
<svg style="left:0px;top:0px" width="800" height="112" viewBox="0 0 800 112"><circle cx="737.5" cy="107" r="2" fill="none" stroke="#555" stroke-width="0.8"/><circle cx="740.8" cy="107.3" r="1.8" fill="none" stroke="#555" stroke-width="0.8"/><path d="M740 105 l2 -2.5 h2 v4" fill="none" stroke="#666" stroke-width="0.8"/><rect x="741.5" y="102" width="2.5" height="2" fill="#777"/></svg>
<div class="a" style="left:746px;top:101.3px;width:14px;height:8.6px;background:#dcdcdc;border:1px solid #ccc"></div>
<svg style="left:0px;top:0px" width="800" height="112" viewBox="0 0 800 112"><path d="M749.5 108.5 h8 M750 108 l2.5 -3 l2 1.5 l2.5 -3.5" fill="none" stroke="#aaa" stroke-width="0.7"/><path d="M750 106.5 v2 M752 105.5 v3 M754 106 v2.5 M756 104 v4.5" stroke="#bbb" stroke-width="0.6"/></svg>
<div class="a" style="left:760px;top:101.3px;width:40px;height:8.6px;background:#ececec;border:1px solid #d6d6d6;border-right:none"></div>
<div class="a" style="left:681px;top:110px;width:119px;height:24.5px;background:#f3f6fa;border-top:1px solid #d0d0d0"></div>
<div class="a" style="left:682px;top:112.3px;width:57.7px;height:9.6px;background:#f7f8fa;border:1px solid #d8d8d8"></div>
<svg style="left:733px;top:115px" width="6" height="4" viewBox="0 0 6 4"><path d="M0.5 0.5 h4 l-2 2.5z" fill="#bbb"/></svg>
<div class="a" style="left:743px;top:114.4px;width:35.5px;height:4.6px;background:#fafafa;border:1px solid #c9c9c9;border-radius:1px"></div>
<div class="a" style="left:682px;top:123px;width:18.6px;height:10.3px;background:#f7f8fa;border:1px solid #d8d8d8"></div>
<svg style="left:694px;top:126.5px" width="6" height="4" viewBox="0 0 6 4"><path d="M0.5 0.5 h4 l-2 2.5z" fill="#bbb"/></svg>
<svg style="left:0px;top:0px" width="800" height="140" viewBox="0 0 800 140"><ellipse cx="717" cy="129.2" rx="5" ry="2.8" fill="#c4c4c4"/><ellipse cx="717" cy="127.3" rx="3.8" ry="1.5" fill="#f2f2f2" stroke="#c8c8c8" stroke-width="0.4"/><circle cx="728.8" cy="125.3" r="0.9" fill="#c8c8c8"/><path d="M728.8 126.3 v3.5 M727.2 127.5 l1.6 -0.5 l1.6 0.5 M727.6 133 l1.2 -3.3 l1.2 3.3" stroke="#c8c8c8" stroke-width="0.7" fill="none"/><path d="M737 124.4 h2.6 v4.5 l-1.3 4 l-1.3 -4z" fill="#e4e4e4" stroke="#c8c8c8" stroke-width="0.5"/><rect x="744.4" y="128" width="7.5" height="5.2" fill="#c4c4c4"/><path d="M746 128 v-1.6 a2.15 2.15 0 0 1 4.3 0 v1.6" fill="none" stroke="#c4c4c4" stroke-width="1.1"/><rect x="754.3" y="126.5" width="4.2" height="3.6" fill="#e8e8e8" stroke="#c8c8c8" stroke-width="0.5"/><path d="M755 126.5 v-1 a1.4 1.4 0 0 1 2.8 0 v1 M758 130.5 l2.5 2.5" fill="none" stroke="#c8c8c8" stroke-width="0.7"/><circle cx="761" cy="133" r="1" fill="none" stroke="#c8c8c8" stroke-width="0.5"/></svg>
<div class="a" style="left:763.8px;top:123px;width:16.2px;height:10.3px;background:#f7f8fa;border:1px solid #e0e0e0"></div>
<svg style="left:774px;top:126.5px" width="6" height="4" viewBox="0 0 6 4"><path d="M0.5 0.5 h4 l-2 2.5z" fill="#bbb"/></svg>
<div class="a" style="left:780.2px;top:123px;width:19px;height:10.3px;background:#f7f8fa;border:1px solid #e0e0e0"></div>
<svg style="left:792px;top:126.5px" width="6" height="4" viewBox="0 0 6 4"><path d="M0.5 0.5 h4 l-2 2.5z" fill="#bbb"/></svg>
<div class="a" style="left:681px;top:134.5px;width:119px;height:160px;background:#f3f6fa;border-top:1.2px solid #c8c8c8"></div>
<div class="a" style="left:682px;top:134.5px;width:1.2px;height:160px;background:#b5b5b5"></div>
<div class="a" style="left:791.7px;top:134.5px;width:8.3px;height:160px;background:#d3d4d8;border-left:1px solid #c6c7cb"></div>
<div class="a" style="left:681px;top:294.5px;width:119px;height:1px;background:#c8c8c8"></div>
<div class="a" style="left:681px;top:295.5px;width:119px;height:9.5px;background:#f3f6fa"></div>
<svg style="left:682px;top:295px" width="12" height="10" viewBox="0 0 12 10"><path d="M1.5 2.5 q3.5 -2 7 0 M1.5 4.5 q3.5 2 7 0 M1.5 6.5 q3.5 2 7 0 M1.5 8.5 q3.5 2 7 0" stroke="#666" stroke-width="0.8" fill="none"/></svg>
<svg style="left:715px;top:295px" width="85" height="11" viewBox="0 0 85 11"><g fill="none" stroke="#cfcfcf" stroke-width="0.8"><path d="M2 1 h6 v6 l-3 3 h-3z"/><path d="M12 1 h6 v6 l-3 3 h-3z"/><path d="M21 2 h7 v8 h-7z"/><path d="M36 2 v6 M33 6 l3 3 l3 -3"/><path d="M42 5 a4 4 0 1 1 8 0 a4 4 0 1 1 -8 0 M46 2 v5"/><rect x="53" y="2" width="10" height="7"/><path d="M67 1 v9 M65 8 l2 2 l2 -2 M70 3 h4 v5"/><path d="M75 3 h8 M76 3 l1 7 h4 l1 -7"/></g><rect x="22" y="3" width="6" height="6" fill="#ddd"/><circle cx="58" cy="5.5" r="2.5" fill="#ddd"/></svg>
<div class="a" style="left:681px;top:305px;width:119px;height:10px;background:#e5e5e5;border-top:1px solid #d0d0d0"></div>
<div class="a" style="left:681.5px;top:306.3px;width:8px;height:8px;background:#ececec;border:1px solid #d6d6d6"></div>
<svg style="left:681.5px;top:306.3px" width="8" height="8" viewBox="0 0 8 8"><path d="M2 2 v3.5 M3.3 2.5 l1.2 1.2 L3.3 5 M4.8 2.5h1.8 M4.8 3.7h1.8 M4.8 5h1.8" stroke="#888" stroke-width="0.5" fill="none"/></svg>
<div class="a" style="left:690.5px;top:305.8px;width:47.5px;height:9.5px;background:#f3f6fa;border:1px solid #d4d4d4;border-bottom:none"></div>
<svg style="left:692px;top:305.5px" width="12" height="11" viewBox="0 0 12 11"><rect x="1" y="8" width="8" height="1.6" fill="#222"/><path d="M2 5.5 l2 2.5 l5 -6.5" stroke="#e01818" stroke-width="1.4" fill="none"/></svg>
<div class="a" style="left:738px;top:305.8px;width:45px;height:9.5px;background:#d6d6d8;border:1px solid #c8c8c8"></div>
<svg style="left:739px;top:305.5px" width="12" height="10" viewBox="0 0 12 10"><path d="M2 2.5 h5 M2 4.5 h5 M2 6.5 h4" stroke="#aaa" stroke-width="0.7"/><circle cx="8" cy="7" r="1.8" fill="none" stroke="#aaa" stroke-width="0.6"/></svg>
<div class="a" style="left:783px;top:305.8px;width:17px;height:9.5px;background:#ececec;border:1px solid #d8d8d8"></div>
<div class="a" style="left:681px;top:315px;width:119px;height:113px;background:#f3f6fa;border-top:2px solid #cfcfcf"></div>
<div class="a" style="left:792.4px;top:317px;width:7.6px;height:111px;background:#d3d4d8;border-left:1px solid #c6c7cb"></div>
<div class="a" style="left:681px;top:317px;width:1px;height:111px;background:#c4c4c4"></div>
<div class="a" style="left:275px;top:130px;width:250px;height:167.5px;background:#f0f0f0;border:1px solid #a060ac;box-shadow:0 2px 10px rgba(0,0,0,0.2)"></div>
<div class="a" style="left:275px;top:130px;width:250px;height:13.8px;background:#861b96"></div>
<svg style="left:509px;top:132px" width="14" height="11" viewBox="0 0 14 11"><path d="M4.3 3 L9.3 8 M9.3 3 L4.3 8" stroke="#dcb8e2" stroke-width="0.7"/></svg>
<div class="a" style="left:280.5px;top:156.5px;width:12px;height:9.3px;background:#ff8080;border:1px solid #9a9a9a;border-right-color:#fff;border-bottom-color:#fff"></div>
<div class="a" style="left:295.0px;top:156.5px;width:12px;height:9.3px;background:#ffff80;border:1px solid #9a9a9a;border-right-color:#fff;border-bottom-color:#fff"></div>
<div class="a" style="left:309.5px;top:156.5px;width:12px;height:9.3px;background:#80ff80;border:1px solid #9a9a9a;border-right-color:#fff;border-bottom-color:#fff"></div>
<div class="a" style="left:324.0px;top:156.5px;width:12px;height:9.3px;background:#00ff80;border:1px solid #9a9a9a;border-right-color:#fff;border-bottom-color:#fff"></div>
<div class="a" style="left:338.5px;top:156.5px;width:12px;height:9.3px;background:#80ffff;border:1px solid #9a9a9a;border-right-color:#fff;border-bottom-color:#fff"></div>
<div class="a" style="left:353.0px;top:156.5px;width:12px;height:9.3px;background:#0080ff;border:1px solid #9a9a9a;border-right-color:#fff;border-bottom-color:#fff"></div>
<div class="a" style="left:367.5px;top:156.5px;width:12px;height:9.3px;background:#ff80c0;border:1px solid #9a9a9a;border-right-color:#fff;border-bottom-color:#fff"></div>
<div class="a" style="left:382.0px;top:156.5px;width:12px;height:9.3px;background:#ff80ff;border:1px solid #9a9a9a;border-right-color:#fff;border-bottom-color:#fff"></div>
<div class="a" style="left:280.5px;top:167.67px;width:12px;height:9.3px;background:#ff0000;border:1px solid #9a9a9a;border-right-color:#fff;border-bottom-color:#fff"></div>
<div class="a" style="left:295.0px;top:167.67px;width:12px;height:9.3px;background:#ffff00;border:1px solid #9a9a9a;border-right-color:#fff;border-bottom-color:#fff"></div>
<div class="a" style="left:309.5px;top:167.67px;width:12px;height:9.3px;background:#80ff00;border:1px solid #9a9a9a;border-right-color:#fff;border-bottom-color:#fff"></div>
<div class="a" style="left:324.0px;top:167.67px;width:12px;height:9.3px;background:#00ff40;border:1px solid #9a9a9a;border-right-color:#fff;border-bottom-color:#fff"></div>
<div class="a" style="left:338.5px;top:167.67px;width:12px;height:9.3px;background:#00ffff;border:1px solid #9a9a9a;border-right-color:#fff;border-bottom-color:#fff"></div>
<div class="a" style="left:353.0px;top:167.67px;width:12px;height:9.3px;background:#0080c0;border:1px solid #9a9a9a;border-right-color:#fff;border-bottom-color:#fff"></div>
<div class="a" style="left:367.5px;top:167.67px;width:12px;height:9.3px;background:#8080c0;border:1px solid #9a9a9a;border-right-color:#fff;border-bottom-color:#fff"></div>
<div class="a" style="left:382.0px;top:167.67px;width:12px;height:9.3px;background:#ff00ff;border:1px solid #9a9a9a;border-right-color:#fff;border-bottom-color:#fff"></div>
<div class="a" style="left:280.5px;top:178.84px;width:12px;height:9.3px;background:#804040;border:1px solid #9a9a9a;border-right-color:#fff;border-bottom-color:#fff"></div>
<div class="a" style="left:295.0px;top:178.84px;width:12px;height:9.3px;background:#ff8040;border:1px solid #9a9a9a;border-right-color:#fff;border-bottom-color:#fff"></div>
<div class="a" style="left:309.5px;top:178.84px;width:12px;height:9.3px;background:#00ff00;border:1px solid #9a9a9a;border-right-color:#fff;border-bottom-color:#fff"></div>
<div class="a" style="left:324.0px;top:178.84px;width:12px;height:9.3px;background:#008080;border:1px solid #9a9a9a;border-right-color:#fff;border-bottom-color:#fff"></div>
<div class="a" style="left:338.5px;top:178.84px;width:12px;height:9.3px;background:#004080;border:1px solid #9a9a9a;border-right-color:#fff;border-bottom-color:#fff"></div>
<div class="a" style="left:353.0px;top:178.84px;width:12px;height:9.3px;background:#8080ff;border:1px solid #9a9a9a;border-right-color:#fff;border-bottom-color:#fff"></div>
<div class="a" style="left:367.5px;top:178.84px;width:12px;height:9.3px;background:#800040;border:1px solid #9a9a9a;border-right-color:#fff;border-bottom-color:#fff"></div>
<div class="a" style="left:382.0px;top:178.84px;width:12px;height:9.3px;background:#ff0080;border:1px solid #9a9a9a;border-right-color:#fff;border-bottom-color:#fff"></div>
<div class="a" style="left:280.5px;top:190.01px;width:12px;height:9.3px;background:#800000;border:1px solid #9a9a9a;border-right-color:#fff;border-bottom-color:#fff"></div>
<div class="a" style="left:295.0px;top:190.01px;width:12px;height:9.3px;background:#ff8000;border:1px solid #9a9a9a;border-right-color:#fff;border-bottom-color:#fff"></div>
<div class="a" style="left:309.5px;top:190.01px;width:12px;height:9.3px;background:#008000;border:1px solid #9a9a9a;border-right-color:#fff;border-bottom-color:#fff"></div>
<div class="a" style="left:324.0px;top:190.01px;width:12px;height:9.3px;background:#008040;border:1px solid #9a9a9a;border-right-color:#fff;border-bottom-color:#fff"></div>
<div class="a" style="left:338.5px;top:190.01px;width:12px;height:9.3px;background:#0000ff;border:1px solid #9a9a9a;border-right-color:#fff;border-bottom-color:#fff"></div>
<div class="a" style="left:353.0px;top:190.01px;width:12px;height:9.3px;background:#0000a0;border:1px solid #9a9a9a;border-right-color:#fff;border-bottom-color:#fff"></div>
<div class="a" style="left:367.5px;top:190.01px;width:12px;height:9.3px;background:#800080;border:1px solid #9a9a9a;border-right-color:#fff;border-bottom-color:#fff"></div>
<div class="a" style="left:382.0px;top:190.01px;width:12px;height:9.3px;background:#8000ff;border:1px solid #9a9a9a;border-right-color:#fff;border-bottom-color:#fff"></div>
<div class="a" style="left:280.5px;top:201.18px;width:12px;height:9.3px;background:#400000;border:1px solid #9a9a9a;border-right-color:#fff;border-bottom-color:#fff"></div>
<div class="a" style="left:295.0px;top:201.18px;width:12px;height:9.3px;background:#804000;border:1px solid #9a9a9a;border-right-color:#fff;border-bottom-color:#fff"></div>
<div class="a" style="left:309.5px;top:201.18px;width:12px;height:9.3px;background:#004000;border:1px solid #9a9a9a;border-right-color:#fff;border-bottom-color:#fff"></div>
<div class="a" style="left:324.0px;top:201.18px;width:12px;height:9.3px;background:#004040;border:1px solid #9a9a9a;border-right-color:#fff;border-bottom-color:#fff"></div>
<div class="a" style="left:338.5px;top:201.18px;width:12px;height:9.3px;background:#000080;border:1px solid #9a9a9a;border-right-color:#fff;border-bottom-color:#fff"></div>
<div class="a" style="left:353.0px;top:201.18px;width:12px;height:9.3px;background:#000040;border:1px solid #9a9a9a;border-right-color:#fff;border-bottom-color:#fff"></div>
<div class="a" style="left:367.5px;top:201.18px;width:12px;height:9.3px;background:#400040;border:1px solid #9a9a9a;border-right-color:#fff;border-bottom-color:#fff"></div>
<div class="a" style="left:382.0px;top:201.18px;width:12px;height:9.3px;background:#400080;border:1px solid #9a9a9a;border-right-color:#fff;border-bottom-color:#fff"></div>
<div class="a" style="left:280.5px;top:212.35px;width:12px;height:9.3px;background:#000000;border:1px solid #9a9a9a;border-right-color:#fff;border-bottom-color:#fff"></div>
<div class="a" style="left:295.0px;top:212.35px;width:12px;height:9.3px;background:#808000;border:1px solid #9a9a9a;border-right-color:#fff;border-bottom-color:#fff"></div>
<div class="a" style="left:309.5px;top:212.35px;width:12px;height:9.3px;background:#808040;border:1px solid #9a9a9a;border-right-color:#fff;border-bottom-color:#fff"></div>
<div class="a" style="left:324.0px;top:212.35px;width:12px;height:9.3px;background:#808080;border:1px solid #9a9a9a;border-right-color:#fff;border-bottom-color:#fff"></div>
<div class="a" style="left:338.5px;top:212.35px;width:12px;height:9.3px;background:#408080;border:1px solid #9a9a9a;border-right-color:#fff;border-bottom-color:#fff"></div>
<div class="a" style="left:353.0px;top:212.35px;width:12px;height:9.3px;background:#c0c0c0;border:1px solid #9a9a9a;border-right-color:#fff;border-bottom-color:#fff"></div>
<div class="a" style="left:367.5px;top:212.35px;width:12px;height:9.3px;background:#400040;border:1px solid #9a9a9a;border-right-color:#fff;border-bottom-color:#fff"></div>
<div class="a" style="left:382.0px;top:212.35px;width:12px;height:9.3px;background:#ffffff;border:1px solid #9a9a9a;border-right-color:#fff;border-bottom-color:#fff"></div>
<div class="a" style="left:279px;top:155px;width:14.5px;height:12px;border:1px solid #555;box-shadow:inset 0 0 0 0.6px #888"></div>
<div class="a" style="left:280.5px;top:241.5px;width:12px;height:9px;background:#000;border:1px solid #9a9a9a;border-right-color:#fff;border-bottom-color:#fff"></div>
<div class="a" style="left:295.0px;top:241.5px;width:12px;height:9px;background:#000;border:1px solid #9a9a9a;border-right-color:#fff;border-bottom-color:#fff"></div>
<div class="a" style="left:309.5px;top:241.5px;width:12px;height:9px;background:#000;border:1px solid #9a9a9a;border-right-color:#fff;border-bottom-color:#fff"></div>
<div class="a" style="left:324.0px;top:241.5px;width:12px;height:9px;background:#000;border:1px solid #9a9a9a;border-right-color:#fff;border-bottom-color:#fff"></div>
<div class="a" style="left:338.5px;top:241.5px;width:12px;height:9px;background:#000;border:1px solid #9a9a9a;border-right-color:#fff;border-bottom-color:#fff"></div>
<div class="a" style="left:353.0px;top:241.5px;width:12px;height:9px;background:#000;border:1px solid #9a9a9a;border-right-color:#fff;border-bottom-color:#fff"></div>
<div class="a" style="left:367.5px;top:241.5px;width:12px;height:9px;background:#000;border:1px solid #9a9a9a;border-right-color:#fff;border-bottom-color:#fff"></div>
<div class="a" style="left:382.0px;top:241.5px;width:12px;height:9px;background:#000;border:1px solid #9a9a9a;border-right-color:#fff;border-bottom-color:#fff"></div>
<div class="a" style="left:280.5px;top:253.0px;width:12px;height:9px;background:#000;border:1px solid #9a9a9a;border-right-color:#fff;border-bottom-color:#fff"></div>
<div class="a" style="left:295.0px;top:253.0px;width:12px;height:9px;background:#000;border:1px solid #9a9a9a;border-right-color:#fff;border-bottom-color:#fff"></div>
<div class="a" style="left:309.5px;top:253.0px;width:12px;height:9px;background:#000;border:1px solid #9a9a9a;border-right-color:#fff;border-bottom-color:#fff"></div>
<div class="a" style="left:324.0px;top:253.0px;width:12px;height:9px;background:#000;border:1px solid #9a9a9a;border-right-color:#fff;border-bottom-color:#fff"></div>
<div class="a" style="left:338.5px;top:253.0px;width:12px;height:9px;background:#000;border:1px solid #9a9a9a;border-right-color:#fff;border-bottom-color:#fff"></div>
<div class="a" style="left:353.0px;top:253.0px;width:12px;height:9px;background:#000;border:1px solid #9a9a9a;border-right-color:#fff;border-bottom-color:#fff"></div>
<div class="a" style="left:367.5px;top:253.0px;width:12px;height:9px;background:#000;border:1px solid #9a9a9a;border-right-color:#fff;border-bottom-color:#fff"></div>
<div class="a" style="left:382.0px;top:253.0px;width:12px;height:9px;background:#000;border:1px solid #9a9a9a;border-right-color:#fff;border-bottom-color:#fff"></div>
<div class="a" style="left:279.5px;top:269.3px;width:114.2px;height:10.2px;background:#cccccc;border:1px solid #c4c4c4"></div>
<div class="a" style="left:279.5px;top:282.4px;width:36px;height:10.8px;background:#e1e1e1;border:1px solid #3c96e0;box-shadow:inset 0 0 0 0.6px #5aa8e8;border-radius:1px"></div>
<div class="a" style="left:319.5px;top:282.4px;width:36.3px;height:10.8px;background:#e1e1e1;border:1px solid #cacaca;border-radius:1px"></div>
<div class="a" style="left:402.5px;top:147px;width:97.5px;height:95.5px;background:linear-gradient(to bottom,rgba(128,128,128,0),#808080),linear-gradient(to right,#f00,#ff0 16.67%,#0f0 33.33%,#0ff 50%,#00f 66.67%,#f0f 83.33%,#f00)"></div>
<svg style="left:453px;top:172px" width="12" height="12" viewBox="0 0 12 12"><path d="M5.9 2.3 v2.4 M5.9 7.3 v2.4 M2.2 6 h2.4 M7.2 6 h2.4" stroke="#111" stroke-width="0.85"/></svg>
<div class="a" style="left:509.3px;top:147.3px;width:6.5px;height:96px;background:linear-gradient(#fff,#3a92d9 50%,#000)"></div>
<svg style="left:516px;top:187px" width="6" height="8" viewBox="0 0 6 8"><path d="M5.5 0.5 L1 4 L5.5 7.5z" fill="#000"/></svg>
<div class="a" style="left:403.2px;top:247.4px;width:31.8px;height:20.3px;background:#3a92d9"></div>
<div class="a" style="left:455.7px;top:247.3px;width:15.2px;height:9.8px;background:#fff;border:1px solid #a0a0a0;border-right-color:#e0e0e0;border-bottom-color:#e0e0e0"></div>
<div class="a" style="left:455.7px;top:258.7px;width:15.2px;height:9.8px;background:#fff;border:1px solid #a0a0a0;border-right-color:#e0e0e0;border-bottom-color:#e0e0e0"></div>
<div class="a" style="left:455.7px;top:270.4px;width:15.2px;height:9.8px;background:#fff;border:1px solid #a0a0a0;border-right-color:#e0e0e0;border-bottom-color:#e0e0e0"></div>
<div class="a" style="left:500px;top:247.3px;width:15.2px;height:9.8px;background:#fff;border:1px solid #a0a0a0;border-right-color:#e0e0e0;border-bottom-color:#e0e0e0"></div>
<div class="a" style="left:500px;top:258.7px;width:15.2px;height:9.8px;background:#fff;border:1px solid #a0a0a0;border-right-color:#e0e0e0;border-bottom-color:#e0e0e0"></div>
<div class="a" style="left:500px;top:270.4px;width:15.2px;height:9.8px;background:#fff;border:1px solid #a0a0a0;border-right-color:#e0e0e0;border-bottom-color:#e0e0e0"></div>
<div class="a" style="left:403.3px;top:282.4px;width:117.4px;height:11px;background:#e1e1e1;border:1px solid #cacaca;border-radius:1px"></div>
<div class="a" style="left:0px;top:428px;width:800px;height:22px;background:linear-gradient(90deg,#2d0b35 0px,#2d0b35 26px,#310e3a 26px,#320f3b 350px,#37123f 380px,#36113f 492px,#2b1436 500px,#2c1436 555px,#310f39 600px,#2f0e37 800px);border-top:0.6px solid #6a5a6e"></div>
<div class="a" style="left:155px;top:429px;width:25px;height:21px;background:#5c1a6c"></div>
<div class="a" style="left:80px;top:448.8px;width:20.5px;height:1.2px;background:#e6a3ea"></div>
<div class="a" style="left:105px;top:448.8px;width:21px;height:1.2px;background:#e6a3ea"></div>
<div class="a" style="left:130.5px;top:448.8px;width:21.5px;height:1.2px;background:#e6a3ea"></div>
<div class="a" style="left:155px;top:448.8px;width:25px;height:1.2px;background:#e6a3ea"></div>
<div class="a" style="left:182.5px;top:448.8px;width:21.5px;height:1.2px;background:#e6a3ea"></div>
<div class="a" style="left:286px;top:448.8px;width:21.30000000000001px;height:1.2px;background:#e6a3ea"></div>
<div class="a" style="left:155px;top:448.6px;width:25px;height:1.4px;background:#f0b6f2"></div>
<svg style="left:0px;top:428px" width="320" height="22" viewBox="0 0 320 22"><path d="M8.2 7.4 L12 6.9 V10.6 H8.2z M12.7 6.8 L17 6.2 V10.6 H12.7z M8.2 11.3 H12 V15 L8.2 14.5z M12.7 11.3 H17 V15.6 L12.7 15.1z" fill="#fff"/><rect x="34.5" y="7.5" width="6.5" height="8" fill="none" stroke="#bbb" stroke-width="0.8"/><path d="M32.5 9 v5 M43 9 v5" stroke="#bbb" stroke-width="0.8"/><circle cx="64.3" cy="11.6" r="5.6" fill="#e8283a"/><circle cx="64.3" cy="11.6" r="5.6" fill="none" stroke="#f5a0a8" stroke-width="0.5"/><path d="M63 14 v-5.5 l3.5 -1 v5.5" fill="none" stroke="#fff" stroke-width="0.9"/><circle cx="62.5" cy="14" r="1.1" fill="#fff"/><circle cx="66" cy="13" r="1.1" fill="#fff"/><circle cx="90" cy="11.5" r="5.6" fill="#e8662a"/><circle cx="90.8" cy="10.8" r="3.6" fill="#2c62b8"/><path d="M85 9 q2 -4 6 -3.5 q-3 1 -3 4 q2 -1 3 1 q-2 1 -3 0 q0 3 4 3.5 q-4 2 -7 -1z" fill="#f5a623"/><rect x="110.8" y="7" width="9.5" height="8" fill="#b8dcf0" transform="rotate(-8 115 11)"/><path d="M111 15.5 l9 -1.5 l-1 -7" fill="none" stroke="#f0a030" stroke-width="0.9"/><path d="M111.5 8 l4 4 l4.5 -4.5" fill="none" stroke="#7ab0d0" stroke-width="0.6"/><rect x="117" y="6.5" width="4" height="3" fill="#e8b040"/><rect x="136.6" y="6.5" width="10" height="10" rx="1.5" fill="#7289da"/><path d="M139 13 q-1 -3 1 -5 q2 -0.8 4 0 q2 2 1 5 q-3 1.3 -6 0z" fill="#fff"/><circle cx="140.6" cy="11" r="0.7" fill="#7289da"/><circle cx="142.8" cy="11" r="0.7" fill="#7289da"/><path d="M144 16.5 l2 1 v-1.5" fill="#7289da"/><rect x="161.9" y="6" width="10.6" height="10.5" fill="#f5f5f5"/><path d="M164.5 10 q0 -2.5 3 -2.5 q3 0 3 2.5 q0 2.5 -3 2.5 q-2 0 -2 -1.3 q0 -1 1.5 -1 M166.5 12.5 q1 2 3.5 2.5" fill="none" stroke="#222" stroke-width="1"/><path d="M187.5 7 h4 l1 1.2 h5.7 v8 h-10.7z" fill="#e8c050"/><rect x="187.5" y="9" width="10.7" height="7.2" fill="#f7d774"/><path d="M190.5 16.2 v-3.5 h4.5 v3.5" fill="none" stroke="#2e8ad8" stroke-width="1.1"/><circle cx="219" cy="12" r="4" fill="#f2b020"/><path d="M215 16 h8 q0 -2 -4 -3 q-4 1 -4 3z" fill="#f2a010"/><path d="M214 12 a5 5 0 0 1 10 0" fill="none" stroke="#2040a0" stroke-width="1.2"/><rect x="213" y="11" width="2" height="4" fill="#1c3aa0"/><rect x="223" y="11" width="2" height="4" fill="#1c3aa0"/><path d="M216.5 11 h5" stroke="#e8381e" stroke-width="1.4"/><path d="M217 8.5 l1.5 1.5 l1.5 -1.5" fill="#e05020"/><rect x="239.2" y="5.5" width="11.7" height="11.5" fill="#e8ecef" stroke="#c8cdd0" stroke-width="0.5"/><text x="245" y="15.3" font-size="11" font-family="Liberation Serif" text-anchor="middle" fill="#3a6a8c" font-weight="bold">P</text><rect x="269" y="6.5" width="7.3" height="10" fill="#c8d8ea"/><path d="M270.5 8.5 h5 M270.5 10.5 h5 M270.5 12.5 h5 M270.5 14.5 h5" stroke="#2b579a" stroke-width="0.6"/><path d="M264.6 6.8 L271 6 V17 L264.6 16.2z" fill="#2b579a"/><text x="267.7" y="13.6" font-size="5.5" font-family="Liberation Sans" text-anchor="middle" fill="#fff" font-weight="bold">W</text><circle cx="296.3" cy="11.3" r="5.6" fill="#db4437"/><path d="M296.3 11.3 L291.5 14.1 A5.6 5.6 0 0 0 299 16.2z" fill="#0f9d58"/><path d="M296.3 11.3 L299 16.2 A5.6 5.6 0 0 0 301.9 11.3 L296.3 11.3z" fill="#ffcd40"/><path d="M296.3 11.3 L301.9 11.3 A5.6 5.6 0 0 0 299.2 6.5z" fill="#ffcd40"/><path d="M296.3 11.3 L291.5 14.1 A5.6 5.6 0 0 1 291.5 8.5z" fill="#0f9d58"/><circle cx="296.3" cy="11.3" r="2.4" fill="#fff"/><circle cx="296.3" cy="11.3" r="1.8" fill="#4285f4"/></svg>
<svg style="left:630px;top:428px" width="170" height="22" viewBox="0 0 170 22"><path d="M10.5 13.5 L13.8 10.3 L17 13.5" fill="none" stroke="#ddd" stroke-width="0.9"/><rect x="26.6" y="8" width="8.4" height="6.5" fill="#7ac0ef"/><rect x="31" y="8" width="4" height="3" fill="#f0a030"/><rect x="26.6" y="13.5" width="8.4" height="1.2" fill="#fff"/><path d="M42.5 7.5 h3 l1 1 h6 v6 h-9.5z" fill="#e6e6e6"/><rect x="44" y="10" width="8" height="4.5" fill="#fff"/><path d="M43 8 l-1 -1" stroke="#ccc"/><rect x="60.6" y="9" width="7.4" height="5.5" rx="1.5" fill="#e8e8e8"/><circle cx="63" cy="12" r="0.7" fill="#333"/><circle cx="65.6" cy="12" r="0.7" fill="#333"/><path d="M78 15 a6 6 0 0 1 6 -6 M79.8 15 a4.2 4.2 0 0 1 4.2 -4.2 M81.6 15 a2.4 2.4 0 0 1 2.4 -2.4" fill="none" stroke="#bbb" stroke-width="0.7"/><circle cx="83.6" cy="14.6" r="0.6" fill="#ddd"/><rect x="93.5" y="9" width="13" height="6.5" fill="none" stroke="#ccc" stroke-width="0.8"/><path d="M95.5 11h1 M97.5 11h1 M99.5 11h1 M101.5 11h1 M103.5 11h1 M97 13.3 h6" stroke="#ccc" stroke-width="0.6"/><path d="M148.5 7.5 h8.5 v7 h-5 l-1.5 1.5 v-1.5 h-2z" fill="none" stroke="#eee" stroke-width="0.8"/></svg>
<svg style="left:0;top:0;will-change:transform" width="800" height="450" font-family="Liberation Sans"><text x="368.9" y="8.9" font-size="6.6" fill="#777" stroke="#777" stroke-width="0.18" textLength="62.2" lengthAdjust="spacingAndGlyphs" >CLIP STUDIO PAINT EX</text><text x="6.1" y="21.1" font-size="6.6" fill="#3a3a3a" stroke="#3a3a3a" stroke-width="0.18" textLength="9.7" lengthAdjust="spacingAndGlyphs" >File</text><text x="24.5" y="21.1" font-size="6.6" fill="#3a3a3a" stroke="#3a3a3a" stroke-width="0.18" textLength="11.4" lengthAdjust="spacingAndGlyphs" >Edit</text><text x="44.7" y="21.1" font-size="6.6" fill="#3a3a3a" stroke="#3a3a3a" stroke-width="0.18" textLength="21.5" lengthAdjust="spacingAndGlyphs" >Story(P)</text><text x="75.7" y="21.1" font-size="6.6" fill="#3a3a3a" stroke="#3a3a3a" stroke-width="0.18" textLength="29.3" lengthAdjust="spacingAndGlyphs" >Animation</text><text x="114.2" y="21.1" font-size="6.6" fill="#3a3a3a" stroke="#3a3a3a" stroke-width="0.18" textLength="14.5" lengthAdjust="spacingAndGlyphs" >Layer</text><text x="138.2" y="21.1" font-size="6.6" fill="#3a3a3a" stroke="#3a3a3a" stroke-width="0.18" textLength="25.7" lengthAdjust="spacingAndGlyphs" >Selection</text><text x="173.2" y="21.1" font-size="6.6" fill="#3a3a3a" stroke="#3a3a3a" stroke-width="0.18" textLength="13.5" lengthAdjust="spacingAndGlyphs" >View</text><text x="195.4" y="21.1" font-size="6.6" fill="#3a3a3a" stroke="#3a3a3a" stroke-width="0.18" textLength="14.6" lengthAdjust="spacingAndGlyphs" >Filter</text><text x="218.7" y="21.1" font-size="6.6" fill="#3a3a3a" stroke="#3a3a3a" stroke-width="0.18" textLength="23.5" lengthAdjust="spacingAndGlyphs" >Window</text><text x="250.9" y="21.1" font-size="6.6" fill="#3a3a3a" stroke="#3a3a3a" stroke-width="0.18" textLength="13.7" lengthAdjust="spacingAndGlyphs" >Help</text><text x="51" y="43.8" font-size="5.9" fill="#333" stroke="#333" stroke-width="0.18" textLength="43" lengthAdjust="spacingAndGlyphs" >Sub Tool [Marquee]</text><text x="42" y="57" font-size="6.2" fill="#222" stroke="#222" stroke-width="0.18" textLength="22" lengthAdjust="spacingAndGlyphs" >Marquee</text><text x="84.4" y="72.2" font-size="5.9" fill="#333" stroke="#333" stroke-width="0.18" textLength="25.8" lengthAdjust="spacingAndGlyphs" >Rectangle</text><text x="93" y="85" font-size="5.9" fill="#333" stroke="#333" stroke-width="0.18" textLength="17.2" lengthAdjust="spacingAndGlyphs" >Ellipse</text><text x="94.8" y="97.6" font-size="5.9" fill="#333" stroke="#333" stroke-width="0.18" textLength="15.4" lengthAdjust="spacingAndGlyphs" >Lasso</text><text x="90.2" y="109.8" font-size="5.9" fill="#333" stroke="#333" stroke-width="0.18" textLength="20.0" lengthAdjust="spacingAndGlyphs" >Polyline</text><text x="76" y="122.2" font-size="5.9" fill="#333" stroke="#333" stroke-width="0.18" textLength="34.2" lengthAdjust="spacingAndGlyphs" >Selection pen</text><text x="71" y="134.7" font-size="5.9" fill="#333" stroke="#333" stroke-width="0.18" textLength="39.2" lengthAdjust="spacingAndGlyphs" >Erase selection</text><text x="70.9" y="146.9" font-size="5.9" fill="#333" stroke="#333" stroke-width="0.18" textLength="39.3" lengthAdjust="spacingAndGlyphs" >Shrink selection</text><text x="51.4" y="166.6" font-size="5.9" fill="#333" stroke="#333" stroke-width="0.18" textLength="54.8" lengthAdjust="spacingAndGlyphs" >Tool property [Rectangle]</text><text x="29" y="176.6" font-size="5.9" fill="#333" stroke="#333" stroke-width="0.18" textLength="25" lengthAdjust="spacingAndGlyphs" >Rectangle</text><text x="35.9" y="201.3" font-size="5.9" fill="#666" stroke="#666" stroke-width="0.18" textLength="13.2" lengthAdjust="spacingAndGlyphs" >How to</text><text x="45.5" y="218.8" font-size="6.2" fill="#333" stroke="#333" stroke-width="0.18" textLength="29.3" lengthAdjust="spacingAndGlyphs" >Aspect type</text><text x="45.5" y="234.6" font-size="5.9" fill="#333" stroke="#333" stroke-width="0.18" textLength="55.7" lengthAdjust="spacingAndGlyphs" >Adjust angle after fixed</text><text x="36" y="251.1" font-size="5.6" fill="#666" stroke="#666" stroke-width="0.18" textLength="13" lengthAdjust="spacingAndGlyphs" >Anti-alias</text><text x="56.5" y="426.2" font-size="6.6" fill="#333" stroke="#333" stroke-width="0.18" textLength="9.1" lengthAdjust="spacingAndGlyphs" >207</text><text x="75.6" y="426.2" font-size="6.6" fill="#333" stroke="#333" stroke-width="0.18" textLength="5.7" lengthAdjust="spacingAndGlyphs" >54</text><text x="91.9" y="426.2" font-size="6.6" fill="#333" stroke="#333" stroke-width="0.18" textLength="6.2" lengthAdjust="spacingAndGlyphs" >68</text><text x="704" y="44" font-size="5.9" fill="#333" stroke="#333" stroke-width="0.18" textLength="21.4" lengthAdjust="spacingAndGlyphs" >Navigator</text><text x="718.7" y="108.4" font-size="5.6" fill="#333" stroke="#333" stroke-width="0.18" textLength="11.3" lengthAdjust="spacingAndGlyphs" >Layer</text><text x="703.8" y="313.9" font-size="5.9" fill="#333" stroke="#333" stroke-width="0.18" textLength="31.9" lengthAdjust="spacingAndGlyphs" >Layer Property</text><text x="752.8" y="313.9" font-size="5.9" fill="#aaa" stroke="#aaa" stroke-width="0.18" textLength="27.7" lengthAdjust="spacingAndGlyphs" >Search Layer</text><text x="277" y="139.7" font-size="6.5" fill="#f0dcf2" stroke="#f0dcf2" stroke-width="0.06" textLength="14.6" lengthAdjust="spacingAndGlyphs" >Color</text><text x="279" y="152.6" font-size="5.9" fill="#333" stroke="#333" stroke-width="0.06" textLength="31.3" lengthAdjust="spacingAndGlyphs" >Basic colors:</text><text x="279.3" y="238.1" font-size="5.9" fill="#333" stroke="#333" stroke-width="0.06" textLength="36.6" lengthAdjust="spacingAndGlyphs" >Custom colors:</text><text x="306.1" y="277" font-size="5.9" fill="#9a9a9a" stroke="#9a9a9a" stroke-width="0.06" textLength="60.6" lengthAdjust="spacingAndGlyphs" >Define Custom Colors &gt;&gt;</text><text x="293.3" y="290.2" font-size="5.9" fill="#222" stroke="#222" stroke-width="0.14" textLength="8.2" lengthAdjust="spacingAndGlyphs" >OK</text><text x="328.3" y="290.2" font-size="5.9" fill="#222" stroke="#222" stroke-width="0.14" textLength="17.5" lengthAdjust="spacingAndGlyphs" >Cancel</text><text x="434.6" y="290.2" font-size="5.9" fill="#222" stroke="#222" stroke-width="0.14" textLength="53.6" lengthAdjust="spacingAndGlyphs" >Add to Custom Colors</text><text x="405.5" y="275.5" font-size="5.9" fill="#333" stroke="#333" stroke-width="0.06" textLength="28" lengthAdjust="spacingAndGlyphs" >Color|Solid</text><text x="442.7" y="254.2" font-size="5.9" fill="#333" stroke="#333" stroke-width="0.06" textLength="11.0" lengthAdjust="spacingAndGlyphs" >Hue:</text><text x="444.7" y="265.7" font-size="5.9" fill="#333" stroke="#333" stroke-width="0.06" textLength="9.0" lengthAdjust="spacingAndGlyphs" >Sat:</text><text x="442.7" y="277.3" font-size="5.9" fill="#333" stroke="#333" stroke-width="0.06" textLength="11.0" lengthAdjust="spacingAndGlyphs" >Lum:</text><text x="486" y="254.2" font-size="5.9" fill="#333" stroke="#333" stroke-width="0.06" textLength="11.6" lengthAdjust="spacingAndGlyphs" >Red:</text><text x="482" y="265.7" font-size="5.9" fill="#333" stroke="#333" stroke-width="0.06" textLength="15.6" lengthAdjust="spacingAndGlyphs" >Green:</text><text x="486" y="277.3" font-size="5.9" fill="#333" stroke="#333" stroke-width="0.06" textLength="11.6" lengthAdjust="spacingAndGlyphs" >Blue:</text><text x="457" y="254.2" font-size="5.9" fill="#222" stroke="#222" stroke-width="0.06" textLength="9" lengthAdjust="spacingAndGlyphs" >138</text><text x="457" y="265.7" font-size="5.9" fill="#222" stroke="#222" stroke-width="0.06" textLength="9" lengthAdjust="spacingAndGlyphs" >162</text><text x="457" y="277.3" font-size="5.9" fill="#222" stroke="#222" stroke-width="0.06" textLength="9" lengthAdjust="spacingAndGlyphs" >129</text><text x="501.3" y="254.2" font-size="5.9" fill="#222" stroke="#222" stroke-width="0.06" textLength="6.7" lengthAdjust="spacingAndGlyphs" >58</text><text x="501.3" y="265.7" font-size="5.9" fill="#222" stroke="#222" stroke-width="0.06" textLength="8.7" lengthAdjust="spacingAndGlyphs" >145</text><text x="501.3" y="277.3" font-size="5.9" fill="#222" stroke="#222" stroke-width="0.06" textLength="8.7" lengthAdjust="spacingAndGlyphs" >217</text><text x="745" y="437.5" font-size="6.2" fill="#f4f0f4" stroke="#f4f0f4" stroke-width="0.04" textLength="22" lengthAdjust="spacingAndGlyphs" >5:25 PM</text><text x="743.8" y="447.4" font-size="6.6" fill="#f4f0f4" stroke="#f4f0f4" stroke-width="0.04" textLength="25.6" lengthAdjust="spacingAndGlyphs" >03/05/18</text></svg>
</body></html>
